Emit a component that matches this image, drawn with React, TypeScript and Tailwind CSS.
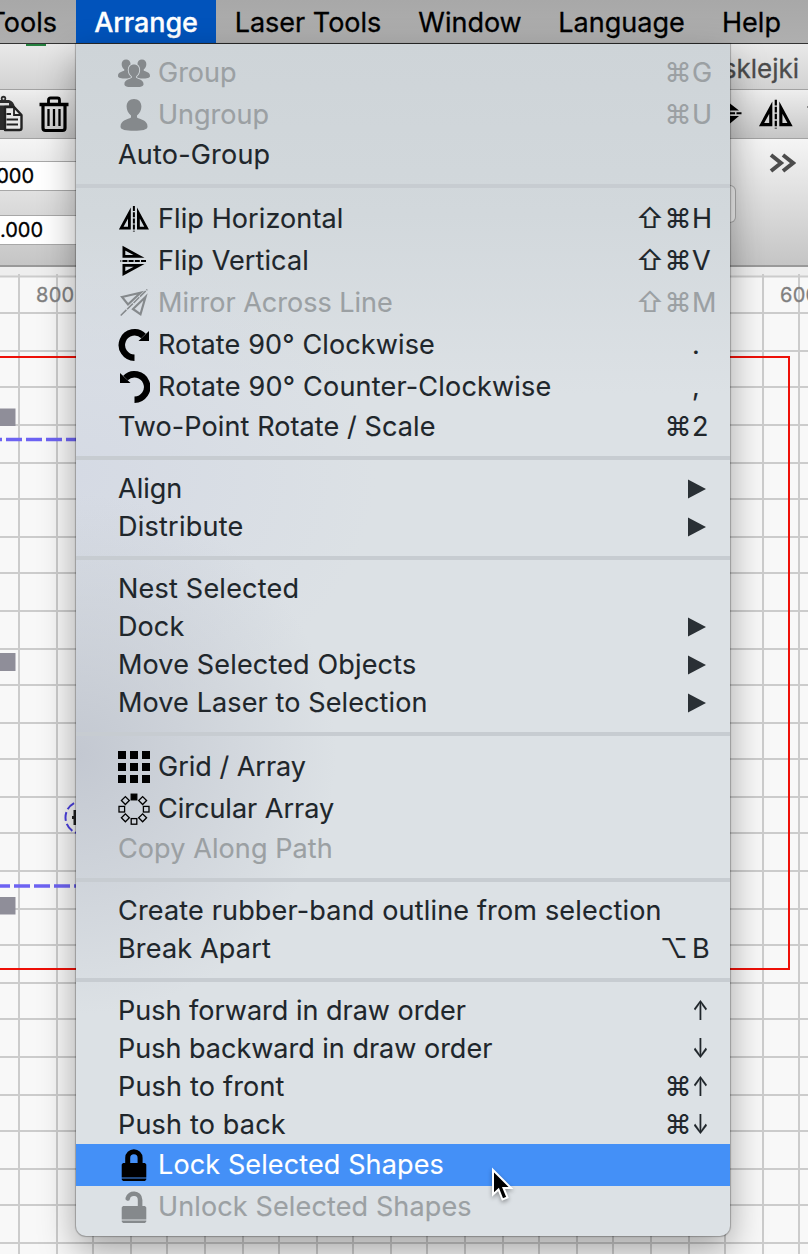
import { ReactNode } from 'react';

interface MenuEntry {
  label: string;
  icon?: ReactNode;
  mods?: string;
  shortcut?: string;
  submenu?: boolean;
  disabled?: boolean;
  active?: boolean;
  tracking?: string;
}

const FlipShape = () => (
  <g fill="none" stroke="currentColor" strokeWidth="2.8" strokeMiterlimit="10">
    <path d="M3.2 25.1 L11.4 25.1 L11.4 10 Z" />
    <path d="M28.6 25.1 L20.4 25.1 L20.4 10 Z" />
    <path d="M15.9 3 V28.5" strokeWidth="2" strokeDasharray="5 1.2" />
  </g>
);

const Icon = ({ children }: { children: ReactNode }) => (
  <svg viewBox="0 0 32 32" className="mr-2 h-8 w-8 shrink-0" fill="currentColor">
    {children}
  </svg>
);

const PERSON = 'M16 0 C20.5 0 23.4 3 23.4 7.5 C23.4 11.5 21.5 14.5 19 16.5 V18.5 C22 20.5 29.5 21 29.5 27.5 C29.5 31 24 31.7 16 31.7 C8 31.7 2.5 31 2.5 27.5 C2.5 21 10 20.5 13 18.5 V16.5 C10.5 14.5 8.6 11.5 8.6 7.5 C8.6 3 11.5 0 16 0 Z';

const icons = {
  group: (
    <Icon>
      <path d={PERSON} transform="translate(-1.5 2.5) scale(.6)" />
      <path d={PERSON} transform="translate(14.3 2.5) scale(.6)" />
      <path d={PERSON} transform="translate(4.6 7.6) scale(.71)" stroke="#cfd5d9" strokeWidth="2.5" paintOrder="stroke" />
    </Icon>
  ),
  ungroup: <Icon><path d={PERSON} /></Icon>,
  flipH: <Icon><FlipShape /></Icon>,
  flipV: (
    <Icon>
      <g transform="translate(-1 0) rotate(90 16 16)"><FlipShape /></g>
    </Icon>
  ),
  mirror: (
    <Icon>
      <g fill="none" stroke="currentColor" strokeWidth="2.2">
        <path d="M4 10 L22.5 5.8 L10 17.5 Z" />
        <path d="M27.5 10 L15 22 L22.5 27.3 Z" />
        <path d="M2.7 28.5 L29.3 2.5" strokeWidth="1.5" strokeDasharray="8 1" />
      </g>
    </Icon>
  ),
  cw: (
    <Icon>
      <path d="M16.5 28.7 A12.7 12.7 0 1 1 25.5 7" fill="none" stroke="currentColor" strokeWidth="6.5" />
      <path d="M31 2 V12 H20.5 Z" />
    </Icon>
  ),
  ccw: (
    <Icon>
      <g transform="translate(33 0) scale(-1 1)">
        <path d="M16.5 28.7 A12.7 12.7 0 1 1 25.5 7" fill="none" stroke="currentColor" strokeWidth="6.5" />
        <path d="M31 2 V12 H20.5 Z" />
      </g>
    </Icon>
  ),
  grid: (
    <Icon>
      {[0, 12, 24].map((y) => [0, 12, 24].map((x) => <rect key={`${x}-${y}`} x={x} y={y} width="8" height="8" />))}
    </Icon>
  ),
  circular: (
    <Icon>
      {[0, 45, 90, 135, 180, 225, 270, 315].map((a) => (
        <rect
          key={a}
          x="13.2"
          y="1.2"
          width="5.6"
          height="5.6"
          fill={a === 0 ? 'currentColor' : 'none'}
          stroke="currentColor"
          strokeWidth="1.3"
          transform={`rotate(${a} 16 16.2)`}
        />
      ))}
    </Icon>
  ),
  lock: (
    <Icon>
      <path d="M9.7 15 V9 a6.2 6.2 0 0 1 12.4 0 V15" fill="none" stroke="currentColor" strokeWidth="5" />
      <path d="M5 14 H27 L28.3 15.5 V28.6 H3.7 V15.5 Z M3.7 29.6 H28.3 V30.5 L27 32 H5 L3.7 30.5 Z" />
    </Icon>
  ),
  unlock: (
    <Icon>
      <path d="M9.7 7.5 C11 1 22.1 1 22.1 9 V16" fill="none" stroke="currentColor" strokeWidth="4.6" strokeLinecap="round" />
      <path d="M5 15 H27 L28.3 16.5 V28.6 H3.7 V16.5 Z M3.7 29.6 H28.3 V30.5 L27 32 H5 L3.7 30.5 Z" />
    </Icon>
  ),
};

const sections: MenuEntry[][] = [
  [
    { label: 'Group', icon: icons.group, mods: '⌘', shortcut: 'G', disabled: true },
    { label: 'Ungroup', icon: icons.ungroup, mods: '⌘', shortcut: 'U', disabled: true },
    { label: 'Auto-Group', tracking: 'tracking-[0.2px]' },
  ],
  [
    { label: 'Flip Horizontal', icon: icons.flipH, mods: '⇧⌘', shortcut: 'H', tracking: 'tracking-[0.1px]' },
    { label: 'Flip Vertical', icon: icons.flipV, mods: '⇧⌘', shortcut: 'V', tracking: 'tracking-[0.1px]' },
    { label: 'Mirror Across Line', icon: icons.mirror, mods: '⇧⌘', shortcut: 'M', disabled: true },
    { label: 'Rotate 90° Clockwise', icon: icons.cw, shortcut: '.', tracking: 'tracking-[0.14px]' },
    { label: 'Rotate 90° Counter-Clockwise', icon: icons.ccw, shortcut: ',', tracking: 'tracking-[0.2px]' },
    { label: 'Two-Point Rotate / Scale', mods: '⌘', shortcut: '2', tracking: 'tracking-[0.1px]' },
  ],
  [
    { label: 'Align', submenu: true },
    { label: 'Distribute', submenu: true, tracking: 'tracking-[0.25px]' },
  ],
  [
    { label: 'Nest Selected', tracking: 'tracking-[0.22px]' },
    { label: 'Dock', submenu: true, tracking: 'tracking-[0.1px]' },
    { label: 'Move Selected Objects', submenu: true, tracking: 'tracking-[0.16px]' },
    { label: 'Move Laser to Selection', submenu: true, tracking: 'tracking-[0.12px]' },
  ],
  [
    { label: 'Grid / Array', icon: icons.grid },
    { label: 'Circular Array', icon: icons.circular },
    { label: 'Copy Along Path', disabled: true, tracking: 'tracking-[0.1px]' },
  ],
  [
    { label: 'Create rubber-band outline from selection', tracking: 'tracking-[0.17px]' },
    { label: 'Break Apart', mods: '⌥', shortcut: 'B', tracking: 'tracking-[0.18px]' },
  ],
  [
    { label: 'Push forward in draw order', shortcut: '↑' },
    { label: 'Push backward in draw order', shortcut: '↓' },
    { label: 'Push to front', mods: '⌘', shortcut: '↑', tracking: 'tracking-[0.2px]' },
    { label: 'Push to back', mods: '⌘', shortcut: '↓', tracking: 'tracking-[0.18px]' },
    { label: 'Lock Selected Shapes', icon: icons.lock, active: true, tracking: 'tracking-[0.12px]' },
    { label: 'Unlock Selected Shapes', icon: icons.unlock, disabled: true, tracking: 'tracking-[0.13px]' },
  ],
];

function MenuRow({ entry }: { entry: MenuEntry }) {
  const height = entry.icon ? 'h-[42px]' : 'h-[38px]';
  const color = entry.active ? 'bg-[#4490f7] text-white' : entry.disabled ? 'text-[#9ba0a3]' : 'text-[#20262b]';
  const iconColor = entry.disabled ? 'text-[#85898c]' : 'text-black';
  const isArrow = entry.shortcut === '↑' || entry.shortcut === '↓';
  return (
    <div className={`flex items-center pl-[42px] ${height} ${color}`}>
      {entry.icon && <span className={iconColor}>{entry.icon}</span>}
      <span className={`grow whitespace-nowrap ${entry.tracking ?? ''}`}>{entry.label}</span>
      {entry.mods?.split('').map((m) => (
        <span key={m} className={`flex shrink-0 ${m === '⌥' ? 'w-8 justify-start' : 'w-7 justify-center'}`}>{m}</span>
      ))}
      {entry.shortcut && (
        <span className="w-[38px] shrink-0">
          <span className={isArrow ? 'block w-[18px] origin-center scale-x-75 -indent-[3px]' : ''}>{entry.shortcut}</span>
        </span>
      )}
      {entry.submenu && (
        <svg viewBox="0 0 18 20" className="mr-6 h-5 w-[18px] shrink-0" fill="#2a3035">
          <path d="M0 .5 L18 10 L0 19.5 Z" />
        </svg>
      )}
    </div>
  );
}

function MenuBar() {
  return (
    <div className="flex h-11 shrink-0 items-center border-b border-[#333] bg-linear-to-b from-[#a8a8a8] to-[#afafaf] text-[27px] text-black [-webkit-text-stroke:0.3px]">
      <div className="flex w-[76px] shrink-0 justify-end overflow-hidden pt-[3px] pr-[19px]">Tools</div>
      <div className="flex h-full w-[140px] shrink-0 items-center justify-center bg-[#0153bb] pt-[3px] font-medium tracking-[-0.1px] text-white">Arrange</div>
      <div className="flex w-[184px] shrink-0 justify-center pt-[3px] whitespace-nowrap">Laser Tools</div>
      <div className="flex w-[140px] shrink-0 justify-center pt-[3px]">Window</div>
      <div className="flex w-[163px] shrink-0 justify-center pt-[3px]">Language</div>
      <div className="flex w-[97px] shrink-0 justify-center pt-[3px]">Help</div>
    </div>
  );
}

function AppBars() {
  return (
    <>
      <div className="flex h-[46px] shrink-0 items-center justify-between border-b border-[#a2a2a2] bg-linear-to-b from-[#e9e9e9] to-[#d2d2d2] pr-[9px] text-[26px] text-[#4b4b4b]">
        <div className="ml-[26px] h-[2px] w-5 self-start bg-[#25803f]" />
        <span className="pt-1 [-webkit-text-stroke:0.3px]">sklejki</span>
      </div>
      <div className="flex h-[49px] shrink-0 items-center justify-between border-b border-[#a2a2a2] bg-linear-to-b from-[#eeeeee] to-[#c6c6c6]">
        <svg viewBox="0 0 76 48" className="h-12 w-[76px]">
          <path d="M0 10 H9 Q14 11 15 18 L8 19 V40 H0 Z" fill="#2c2c2c" />
          <path d="M0 13 H9 V15.5 H0 Z" fill="#ddd" />
          <circle cx="3.5" cy="8.5" r="2.7" fill="#2c2c2c" />
          <circle cx="3.5" cy="8.8" r="1" fill="#ddd" />
          <path d="M5 17 H14 L21.5 25 V38 Q21.5 40 19.5 40 H5 Z" fill="#e8e8e8" stroke="#222" strokeWidth="2.4" strokeLinejoin="round" />
          <path d="M14 17 V25 H21 M6.5 24 H11 M6.5 29.5 H18 M6.5 34.5 H18" stroke="#222" strokeWidth="1.8" fill="none" />
          <g fill="none" stroke="#000">
            <path d="M39.5 14.5 H68.5" strokeWidth="3.5" />
            <path d="M48.5 13 V10 Q48.5 8 50.5 8 H57.5 Q59.5 8 59.5 10 V13" strokeWidth="2.8" />
            <path d="M43 16 V38 Q43 40.5 45.5 40.5 H62.5 Q65 40.5 65 38 V16" strokeWidth="3.2" />
            <path d="M48.5 19 V36 M54 19 V36 M59.5 19 V36" strokeWidth="2.3" />
          </g>
        </svg>
        <svg viewBox="0 0 78 48" className="h-12 w-[78px]">
          <path d="M0 13.5 L9 20.5 H0 Z M0 26 H9 L0 33.5 Z" />
          <path d="M0 23.3 H13" stroke="#000" strokeWidth="2" strokeDasharray="5 1.5" />
          <g transform="translate(28 6.5) scale(1.12)"><FlipShape /></g>
          <path d="M77 17 h1" stroke="#888" strokeWidth="2" />
        </svg>
      </div>
      <div className="flex h-32 shrink-0 justify-between border-b-2 border-[#999] bg-linear-to-b from-[#f5f5f5] to-[#c5c5c5] text-[20px] text-black">
        <div className="flex w-[76px] flex-col pt-[22px] [-webkit-text-stroke:0.3px]">
          <div className="flex h-[30px] items-center justify-end overflow-hidden border-y border-[#a8a8a8] bg-white pr-[42px]">0.000</div>
          <div className="mt-[24px] flex h-[30px] items-center justify-end overflow-hidden border-y border-[#a8a8a8] bg-white pr-[33px]">0.000</div>
        </div>
        <div className="flex w-[78px] items-start justify-between">
          <div className="mt-[46px] h-[38px] w-[6px] rounded-r-[6px] border border-l-0 border-[#aaa] bg-[#eee]" />
          <svg viewBox="0 0 28 22" className="mt-[13px] mr-[12px] h-[22px] w-7" fill="none" stroke="#4c4c4c" strokeWidth="4">
            <path d="M3 3 L13 11 L3 19 M15 3 L25 11 L15 19" />
          </svg>
        </div>
      </div>
    </>
  );
}

const gridX = [19, 57, 93, 131, 167, 205, 243, 279, 317, 353, 391, 427, 465, 503, 539, 577, 613, 651, 689, 725, 763, 799];
const gridY = [276.5, 313, 351, 387, 425, 463, 499, 537, 573, 611, 649, 685, 723, 759, 797, 833, 871, 909, 945, 983, 1019, 1057, 1095, 1131, 1169, 1205, 1243];

function Canvas() {
  return (
    <svg viewBox="0 267 808 987" className="h-[987px] w-[808px] shrink-0 bg-[#f8f8f8]">
      <rect x="0" y="267" width="808" height="9" fill="#eeeeee" />
      <g stroke="#cccccc" strokeWidth="2">
        {gridX.map((x) => <path key={x} d={`M${x} 274 V1254`} />)}
        {gridY.map((y) => <path key={y} d={`M0 ${y} H808`} />)}
      </g>
      <g fill="#808080" stroke="#808080" strokeWidth="0.3" fontSize="20" letterSpacing="0.3">
        <text x="36" y="302">800</text>
        <text x="780" y="302">600</text>
      </g>
      <path d="M0 357 H789 V969 H0" fill="none" stroke="#ee1008" strokeWidth="2" />
      <g fill="#8f8e99">
        <rect x="0" y="408.5" width="15.5" height="17.5" />
        <rect x="0" y="653" width="15.5" height="18" />
        <rect x="0" y="897" width="15.5" height="17.5" />
      </g>
      <g stroke="#6d63f2" strokeWidth="3.5" strokeDasharray="16 4" fill="none">
        <path d="M-14 439.5 H80" />
        <path d="M-6 886 H80" />
      </g>
      <circle cx="82" cy="817.5" r="16.5" fill="none" stroke="#4a3fe0" strokeWidth="2" strokeDasharray="9 3" />
      <path d="M75 810 V825 M72 817.5 H78" stroke="#222" strokeWidth="3" />
    </svg>
  );
}

export default function App() {
  return (
    <div className="relative flex h-[1254px] w-[808px] flex-col overflow-hidden bg-[#f8f8f8] font-['Inter','DejaVu_Sans',sans-serif]">
      <MenuBar />
      <AppBars />
      <Canvas />

      <div className="absolute top-11 left-[76px] w-[654px] overflow-hidden rounded-b-[10px] bg-[#dce1e5] bg-[radial-gradient(ellipse_260px_260px_at_0px_710px,#c3c8d1,transparent),radial-gradient(ellipse_300px_240px_at_0px_430px,#d5dae4,transparent),linear-gradient(to_bottom,#ced4d8_0px,#d2d8dc_170px,#dce1e5_350px)] bg-no-repeat py-2 text-[27px] shadow-[0_0_1px_1px_rgba(0,0,0,0.25),0_14px_36px_rgba(0,0,0,0.35)] [-webkit-text-stroke:0.12px]">
        {sections.map((section, i) => (
          <div key={i}>
            {i > 0 && (
              <div className="flex h-6 items-center">
                <div className="h-1 w-full bg-[#c7ccd1]" />
              </div>
            )}
            {section.map((entry) => (
              <MenuRow key={entry.label} entry={entry} />
            ))}
          </div>
        ))}
      </div>

      <svg viewBox="0 0 28 38" className="absolute top-[1167px] left-[490px] h-[38px] w-7 drop-shadow-[0_2px_2px_rgba(0,0,0,0.35)]">
        <path d="M3 3 V27.5 L8.5 22.5 L12.5 32.5 L17.5 30.5 L13.5 21 H21 Z" fill="#000" stroke="#fff" strokeWidth="2" />
      </svg>
    </div>
  );
}
